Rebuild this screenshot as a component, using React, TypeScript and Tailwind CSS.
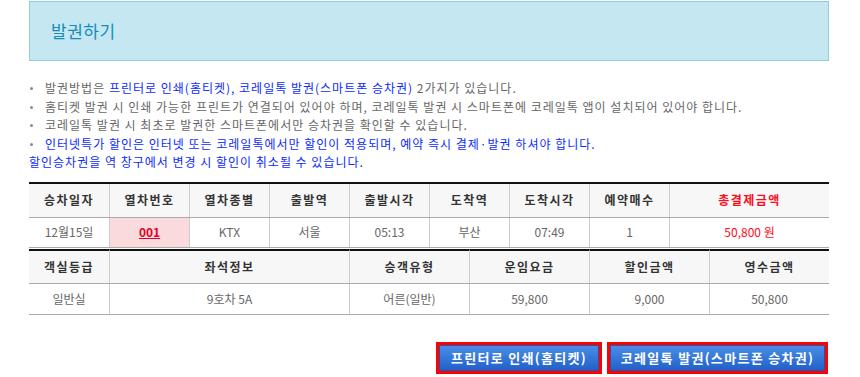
import React from "react";

const F = { fontFamily: '"Noto Sans CJK KR", "Noto Sans", sans-serif' };

function Bullet() {
  return <span className="inline-block w-[3px] h-[3px] rounded-full bg-[#8a8a8a] mr-[12px] ml-[1px] align-middle relative top-[-1px]" />;
}

const t1Head = [
  { w: "w-[80px]", t: "승차일자" },
  { w: "w-[80px]", t: "열차번호" },
  { w: "w-[80px]", t: "열차종별" },
  { w: "w-[80px]", t: "출발역" },
  { w: "w-[80px]", t: "출발시각" },
  { w: "w-[80px]", t: "도착역" },
  { w: "w-[80px]", t: "도착시각" },
  { w: "w-[80px]", t: "예약매수" },
  { w: "flex-1", t: "총결제금액", red: true },
];

const t1Data = ["12월15일", "001", "KTX", "서울", "05:13", "부산", "07:49", "1", "50,800 원"];

const t2Head = [
  { w: "w-[80px]", t: "객실등급" },
  { w: "w-[240px]", t: "좌석정보" },
  { w: "w-[120px]", t: "승객유형" },
  { w: "w-[120px]", t: "운임요금" },
  { w: "w-[120px]", t: "할인금액" },
  { w: "flex-1", t: "영수금액" },
];
const t2Data = ["일반실", "9호차 5A", "어른(일반)", "59,800", "9,000", "50,800"];

export default function App() {
  return (
    <div className="w-[860px] h-[377px] bg-white overflow-hidden" style={F}>
      <div className="ml-[29px] mt-[1px] w-[800px] h-[60px] border border-[#93cce0] bg-[#c5e7f1] flex items-center pl-[21px]">
        <span className="text-[17px] text-[#168cba] tracking-[0.5px]">발권하기</span>
      </div>

      <div className="ml-[29px] mt-[18px] text-[12px] leading-[18.5px] text-[#666] tracking-[1px]">
        <div>
          <Bullet />발권방법은 <span className="text-[#0a2bff]">프린터로 인쇄(홈티켓), 코레일톡 발권(스마트폰 승차권)</span> 2가지가 있습니다.
        </div>
        <div>
          <Bullet />홈티켓 발권 시 인쇄 가능한 프린트가 연결되어 있어야 하며, 코레일톡 발권 시 스마트폰에 코레일톡 앱이 설치되어 있어야 합니다.
        </div>
        <div>
          <Bullet />코레일톡 발권 시 최초로 발권한 스마트폰에서만 승차권을 확인할 수 있습니다.
        </div>
        <div className="text-[#0a2bff]">
          <Bullet />인터넷특가 할인은 인터넷 또는 코레일톡에서만 할인이 적용되며, 예약 즉시 결제·발권 하셔야 합니다.
          <br />
          할인승차권을 역 창구에서 변경 시 할인이 취소될 수 있습니다.
        </div>
      </div>

      {/* Table 1 */}
      <div className="ml-[29px] mt-[10px] w-[800px] border-t-[2px] border-[#111] text-[12px]">
        <div className="flex h-[34px] bg-[#f7f7f7] border-b border-[#aaa]">
          {t1Head.map((c, i) => (
            <div
              key={i}
              className={`${c.w} flex items-center justify-center font-bold tracking-[1.5px] ${i > 0 ? "border-l border-[#cccccc]" : ""} ${c.red ? "text-[#ff0a1a]" : "text-[#333]"}`}
            >
              {c.t}
            </div>
          ))}
        </div>
        <div className="flex h-[30px] border-b border-[#aaa]">
          {t1Data.map((d, i) => (
            <div
              key={i}
              className={`${t1Head[i].w} flex items-center justify-center ${i > 0 ? "border-l border-[#cccccc]" : ""} ${i === 1 ? "bg-[#fadadd]" : ""} ${i === 8 ? "text-[#ff0a1a]" : "text-[#666]"}`}
            >
              {i === 1 ? <span className="text-[#e4002b] font-bold underline">{d}</span> : d}
            </div>
          ))}
        </div>
      </div>

      {/* Table 2 */}
      <div className="ml-[29px] mt-[1px] w-[800px] text-[12px]">
        <div className="flex h-[35px] bg-[#f7f7f7] border-b border-[#aaa]">
          {t2Head.map((c, i) => (
            <div
              key={i}
              className={`${c.w} flex items-center justify-center font-bold tracking-[1.5px] text-[#333] border-t-[2px] border-t-[#111] ${i > 0 ? "border-l border-l-[#cccccc]" : ""}`}
            >
              {c.t}
            </div>
          ))}
        </div>
        <div className="flex h-[31px] border-b border-[#aaa]">
          {t2Data.map((d, i) => (
            <div
              key={i}
              className={`${t2Head[i].w} flex items-center justify-center text-[#666] ${i > 0 ? "border-l border-[#cccccc]" : ""}`}
            >
              {d}
            </div>
          ))}
        </div>
      </div>

      {/* Buttons */}
      <div className="mt-[27px] w-[828px] flex justify-end gap-[5px]">
        <div className="w-[166px] h-[32px] border-[3px] border-[#ff0000] bg-white">
          <div className="w-full h-full border border-[#2456b0] bg-gradient-to-b from-[#4a8ee6] to-[#2160c9] flex items-center justify-center text-white font-bold text-[13px] tracking-[1.3px]">
            프린터로 인쇄(홈티켓)
          </div>
        </div>
        <div className="w-[221px] h-[32px] border-[3px] border-[#ff0000] bg-white">
          <div className="w-full h-full border border-[#2456b0] bg-gradient-to-b from-[#4a8ee6] to-[#2160c9] flex items-center justify-center text-white font-bold text-[13px] tracking-[1.3px]">
            코레일톡 발권(스마트폰 승차권)
          </div>
        </div>
      </div>
    </div>
  );
}
